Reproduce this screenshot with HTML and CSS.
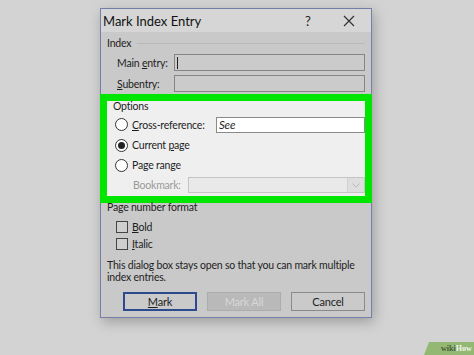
FILE: index.html
```html
<!DOCTYPE html>
<html lang="en">
<head>
    <meta charset="UTF-8">
    <title>Mark Index Entry</title>
    <link rel="stylesheet" href="styles.css">
</head>
<body>
    <div class="dialog">
        <div class="title-bar">
            <span class="title">Mark Index Entry</span>
            <span class="help">?</span>
            <span class="close">
                <svg width="12" height="12" viewBox="0 0 12 12"><path d="M1 1 L11 11 M11 1 L1 11" stroke="#333" stroke-width="1.2" fill="none"/></svg>
            </span>
        </div>
        <div class="group-label index"><span>Index</span><i class="rule"></i></div>
        <div class="field-row">
            <label>Main <u>e</u>ntry:</label>
            <div class="textbox"><i class="caret"></i></div>
        </div>
        <div class="field-row">
            <label><u>S</u>ubentry:</label>
            <div class="textbox"></div>
        </div>
        <div class="options">
            <div class="group-label inner"><span>Options</span></div>
            <div class="option-row first">
                <span class="radio"></span>
                <span class="opt-label"><u>C</u>ross-reference:</span>
                <div class="textbox white"><em>See</em></div>
            </div>
            <div class="option-row current">
                <span class="radio checked"></span>
                <span class="opt-label">Current <u>p</u>age</span>
            </div>
            <div class="option-row">
                <span class="radio"></span>
                <span class="opt-label">Page ran<u>g</u>e</span>
            </div>
            <div class="option-row bookmark">
                <span class="opt-label muted">Bookmark:</span>
                <div class="combo">
                    <span class="arrow">
                        <svg width="8" height="5" viewBox="0 0 8 5"><path d="M0.5 0.5 L4 4 L7.5 0.5" stroke="#b8b8b8" fill="none"/></svg>
                    </span>
                </div>
            </div>
        </div>
        <div class="group-label format"><span>Page number format</span></div>
        <div class="check-row first">
            <span class="checkbox"></span><span><u>B</u>old</span>
        </div>
        <div class="check-row">
            <span class="checkbox"></span><span><u>I</u>talic</span>
        </div>
        <p class="note">This dialog box stays open so that you can mark multiple index entries.</p>
        <div class="buttons">
            <button class="default"><u>M</u>ark</button>
            <button class="disabled">Mark <u>A</u>ll</button>
            <button>Cancel</button>
        </div>
    </div>
    <div class="badge"><span class="wiki">wiki</span><span class="how">How</span></div>
</body>
</html>
```

FILE: styles.css
```css
body {
    margin: 0;
    padding: 8px 0 0 100px;
    height: 355px;
    box-sizing: border-box;
    background: #d3d3d3;
    font-family: 'Lato', 'Open Sans', sans-serif;
    font-size: 10.5px;
    letter-spacing: -0.2px;
    color: #1e1e1e;
    position: relative;
    overflow: hidden;
}
.dialog {
    width: 272px;
    height: 310px;
    box-sizing: border-box;
    border: 1px solid #7480a8;
    background: #c9c9c9;
    box-shadow: 2px 4px 12px rgba(0, 0, 0, 0.25);
    display: flex;
    flex-direction: column;
}
.title-bar {
    height: 23px;
    flex-shrink: 0;
    background: #d6d6d6;
    display: flex;
    align-items: center;
    padding-left: 2px;
}
.title {
    font-size: 13px;
    letter-spacing: 0;
    flex: 1;
    color: #111;
}
.help {
    font-size: 13px;
    width: 16px;
    margin-right: 22px;
}
.close {
    display: flex;
    margin-right: 16px;
}
.group-label {
    display: flex;
    align-items: center;
    padding: 0 6px;
    height: 14px;
    flex-shrink: 0;
    white-space: nowrap;
}
.group-label.index {
    margin-top: 4px;
}
.group-label.format {
    margin-top: -1px;
    height: 10px;
}
.group-label .rule {
    flex: 1;
    height: 1px;
    background: #b9b9b9;
    margin-left: 6px;
}
.group-label.inner {
    padding: 0;
    height: 10px;
}
.field-row {
    display: flex;
    align-items: center;
    height: 17px;
    margin-top: 4px;
    padding: 0 6px 0 16px;
    flex-shrink: 0;
}
.field-row label {
    width: 57px;
    white-space: nowrap;
    flex-shrink: 0;
}
.textbox {
    flex: 1;
    height: 17px;
    box-sizing: border-box;
    border: 1px solid #858585;
    background: #cbcbcb;
    display: flex;
    align-items: center;
    padding-left: 2px;
}
.caret {
    width: 1px;
    height: 12px;
    background: #222;
}
.textbox.white {
    background: #fff;
    border-color: #8a8a8a;
    height: 16px;
}
.textbox em {
    font-size: 11.5px;
}
.options {
    margin: 2px -1px 0;
    border: 7px solid #00e600;
    background: #efefef;
    height: 109px;
    flex-shrink: 0;
    box-sizing: border-box;
    padding: 0 0 0 6px;
}
.option-row {
    display: flex;
    align-items: center;
    height: 20px;
    padding-left: 2px;
}
.option-row.first {
    margin-top: 5px;
    height: 17px;
}
.option-row.current {
    margin-top: 2px;
}
.option-row.bookmark {
    margin-top: 2px;
    height: 16px;
    padding-left: 20px;
}
.radio {
    width: 13px;
    height: 13px;
    flex-shrink: 0;
    box-sizing: border-box;
    border: 1px solid #333;
    border-radius: 50%;
    background: #fff;
    margin-right: 4px;
    display: flex;
    align-items: center;
    justify-content: center;
}
.radio.checked::after {
    content: "";
    width: 7px;
    height: 7px;
    border-radius: 50%;
    background: #222;
}
.opt-label {
    width: 84px;
    white-space: nowrap;
    flex-shrink: 0;
}
.muted {
    color: #9a9a9a;
    width: 55px;
}
.combo {
    flex: 1;
    height: 16px;
    box-sizing: border-box;
    border: 1px solid #c4c4c4;
    background: #e9e9e9;
    display: flex;
    justify-content: flex-end;
}
.arrow {
    width: 16px;
    border-left: 1px solid #d2d2d2;
    background: #dedede;
    display: flex;
    align-items: center;
    justify-content: center;
}
.check-row {
    display: flex;
    align-items: center;
    height: 12px;
    margin-top: 5px;
    padding-left: 15px;
    flex-shrink: 0;
}
.check-row.first {
    margin-top: 9px;
}
.checkbox {
    width: 12px;
    height: 12px;
    box-sizing: border-box;
    border: 1px solid #444;
    background: #cfcfcf;
    margin-right: 4px;
}
.note {
    margin: 9px 0 0;
    padding: 0 6px;
    line-height: 12px;
}
.buttons {
    display: flex;
    gap: 10px;
    padding: 0 6px 0 22px;
    margin-top: 9px;
}
button {
    width: 74px;
    height: 19px;
    box-sizing: border-box;
    border: 1px solid #8a8a8a;
    background: #cacaca;
    font-family: inherit;
    font-size: 11px;
    letter-spacing: inherit;
    color: #1e1e1e;
    padding: 0;
}
button.default {
    border: 2px solid #2d4a8f;
}
button.disabled {
    border-color: #adadad;
    background: #b9b9b9;
    color: #d8d8d8;
}
button.disabled u {
    text-decoration: none;
}
.badge {
    position: absolute;
    right: 0;
    bottom: 0;
    height: 13px;
    width: 50px;
    box-sizing: border-box;
    padding-left: 17px;
    background: #93b874;
    clip-path: polygon(5px 0, 100% 0, 100% 100%, 0 100%);
    font-family: 'Liberation Serif', serif;
    font-weight: bold;
    font-size: 8px;
    letter-spacing: 0;
    line-height: 13px;
    white-space: nowrap;
    display: flex;
    align-items: center;
}
.wiki {
    color: #4a5a3b;
}
.how {
    color: #f2f5ec;
}
```
